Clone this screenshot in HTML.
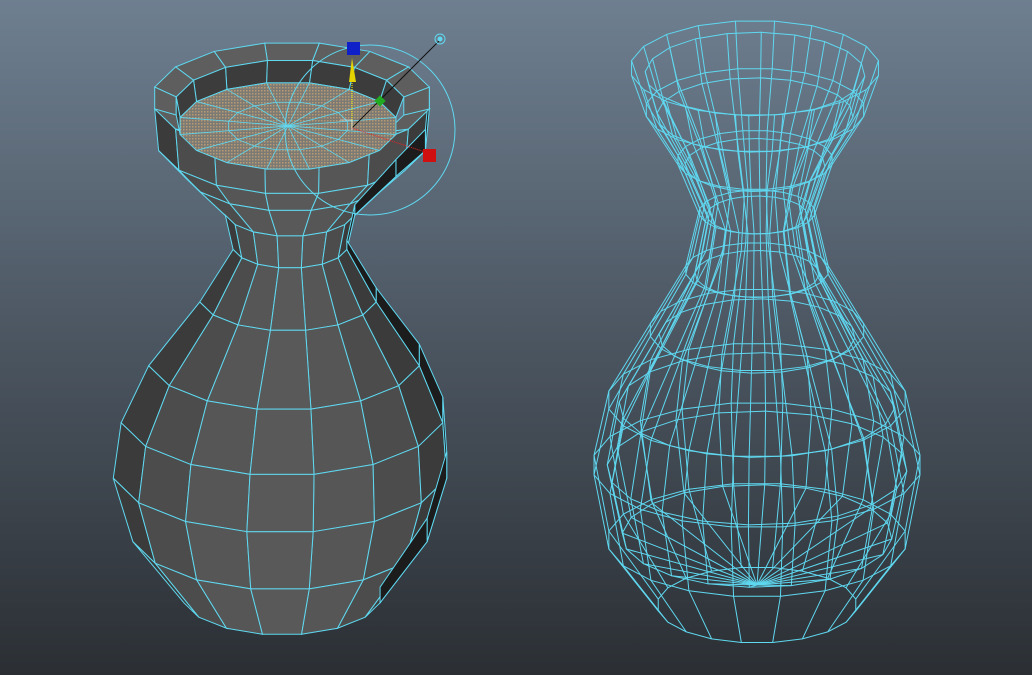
<!DOCTYPE html>
<html><head><meta charset="utf-8"><style>
html,body{margin:0;padding:0;width:1032px;height:675px;overflow:hidden}
body{background:linear-gradient(#6e7f90 0%,#4f5a66 45%,#2b2f34 100%)}
svg{position:absolute;left:0;top:0}
</style></head><body>
<svg id="s" width="1032" height="675" viewBox="0 0 1032 675" xmlns="http://www.w3.org/2000/svg">
<defs>
<pattern id="dots" width="3" height="3" patternUnits="userSpaceOnUse"><rect width="3" height="3" fill="#7c7a74"/><rect width="1.5" height="1.5" fill="#b89a72"/></pattern>
</defs>
<g id="L"></g><g id="R"></g>
<g id="G">
<circle cx="370" cy="130" r="85" fill="none" stroke="#5fd8f0" stroke-width="1"/>
<line x1="352" y1="128" x2="440" y2="40" stroke="#111" stroke-width="1"/>
<circle cx="440" cy="39" r="5" fill="none" stroke="#5fd8f0"/><circle cx="440" cy="39" r="2.5" fill="#5fd8f0"/>
<line x1="352" y1="128" x2="352" y2="72" stroke="#ff0" stroke-dasharray="1 1"/>
<polygon points="349,82 352,58 356,82" fill="#e6d400"/>
<rect x="347" y="42" width="13" height="13" fill="#1020c8"/>
<line x1="352" y1="128" x2="425" y2="152" stroke="#e22" stroke-dasharray="1 1"/>
<rect x="423" y="149" width="13" height="13" fill="#d01010"/>
<rect x="376" y="97" width="8" height="8" fill="#2a2" transform="rotate(45 380 101)"/>
<path d="M340 120 H352 V130" fill="none" stroke="#fff" stroke-width=".6"/>
</g>
</svg>
<script>
(function(){
const C='#5fd8f0';
function ring(cx,cy,r,k,n,t){const p=[];for(let i=0;i<n;i++){const a=(i+0.5)*2*Math.PI/n+(t||0);p.push([cx+r*Math.sin(a),cy+r*k*Math.cos(a),Math.cos(a),Math.sin(a)]);}return p;}
function el(tag,at){const e=document.createElementNS('http://www.w3.org/2000/svg',tag);for(const k in at)e.setAttribute(k,at[k]);return e;}
function pts(a){return a.map(q=>q[0]+','+q[1]).join(' ');}
const L=document.getElementById('L');
const lp=[[292,98,140],[292,140,136],[290,168,108],[290,210,66],[290,245,58],[288,295,90],[284,355,138],[282,410,164],[280,465,170],[280,530,150],[282,595,100]];
const n=16,k=0.4;
const rings=lp.map(p=>ring(p[0],p[1],p[2],k,n));
for(let j=0;j<rings.length-1;j++){for(let i=0;i<n;i++){const a=rings[j][i],b=rings[j][(i+1)%n],c=rings[j+1][(i+1)%n],d=rings[j+1][i];
 if(a[2]+b[2]<0)continue;
 const f=Math.max(0,(a[2]+b[2])/2);
 const g=Math.round(28+62*Math.pow(f,0.7));
 L.appendChild(el('polygon',{points:pts([a,b,c,d]),fill:`rgb(${g},${g},${g})`,stroke:C,'stroke-width':1}));}}
const topR=ring(292,98,140,k,n),inn=ring(290,106,116,k,n),fl=ring(288,126,110,k,n);
for(let i=0;i<n;i++){const a=topR[i],b=topR[(i+1)%n],c=inn[(i+1)%n],d=inn[i];L.appendChild(el('polygon',{points:pts([a,b,c,d]),fill:'#5e5e5e',stroke:C,'stroke-width':1}));}
for(let i=0;i<n;i++){const a=inn[i],b=inn[(i+1)%n],c=fl[(i+1)%n],d=fl[i];if(a[2]>0)continue;L.appendChild(el('polygon',{points:pts([a,b,c,d]),fill:'#3c3c3c',stroke:C,'stroke-width':1}));}
L.appendChild(el('polygon',{points:pts(fl),fill:'url(#dots)',stroke:C}));
for(let i=0;i<n;i++)L.appendChild(el('line',{x1:288,y1:126,x2:fl[i][0],y2:fl[i][1],stroke:C,'stroke-width':.8}));
L.appendChild(el('polygon',{points:fl.map(q=>(288+(q[0]-288)*.55)+','+(126+(q[1]-126)*.55)).join(' '),fill:'none',stroke:C,'stroke-width':.8}));
const R=document.getElementById('R');
const rp=[[755,68,125],[755,110,110],[755,160,78],[757,212,58],[757,270,72],[757,330,108],[757,400,150],[757,465,165],[757,540,150],[757,605,100]];
const ip=[[755,74,110],[755,115,98],[755,165,70],[757,215,50],[757,274,62],[757,336,98],[757,405,138],[757,468,150],[757,536,135],[757,585,0]];
const m=20,kk=0.38;
[rp,ip].forEach((P,ii)=>{const rr=P.map(p=>ring(p[0],p[1],p[2],kk,m,ii*0.1));
 rr.forEach((r,j)=>{if(P[j][2]>0)R.appendChild(el('polygon',{points:pts(r),fill:'none',stroke:C,'stroke-width':1}));});
 for(let i=0;i<m;i++){R.appendChild(el('polyline',{points:rr.map(r=>r[i][0]+','+r[i][1]).join(' '),fill:'none',stroke:C,'stroke-width':1}));}});
})();
</script>
</body></html>
